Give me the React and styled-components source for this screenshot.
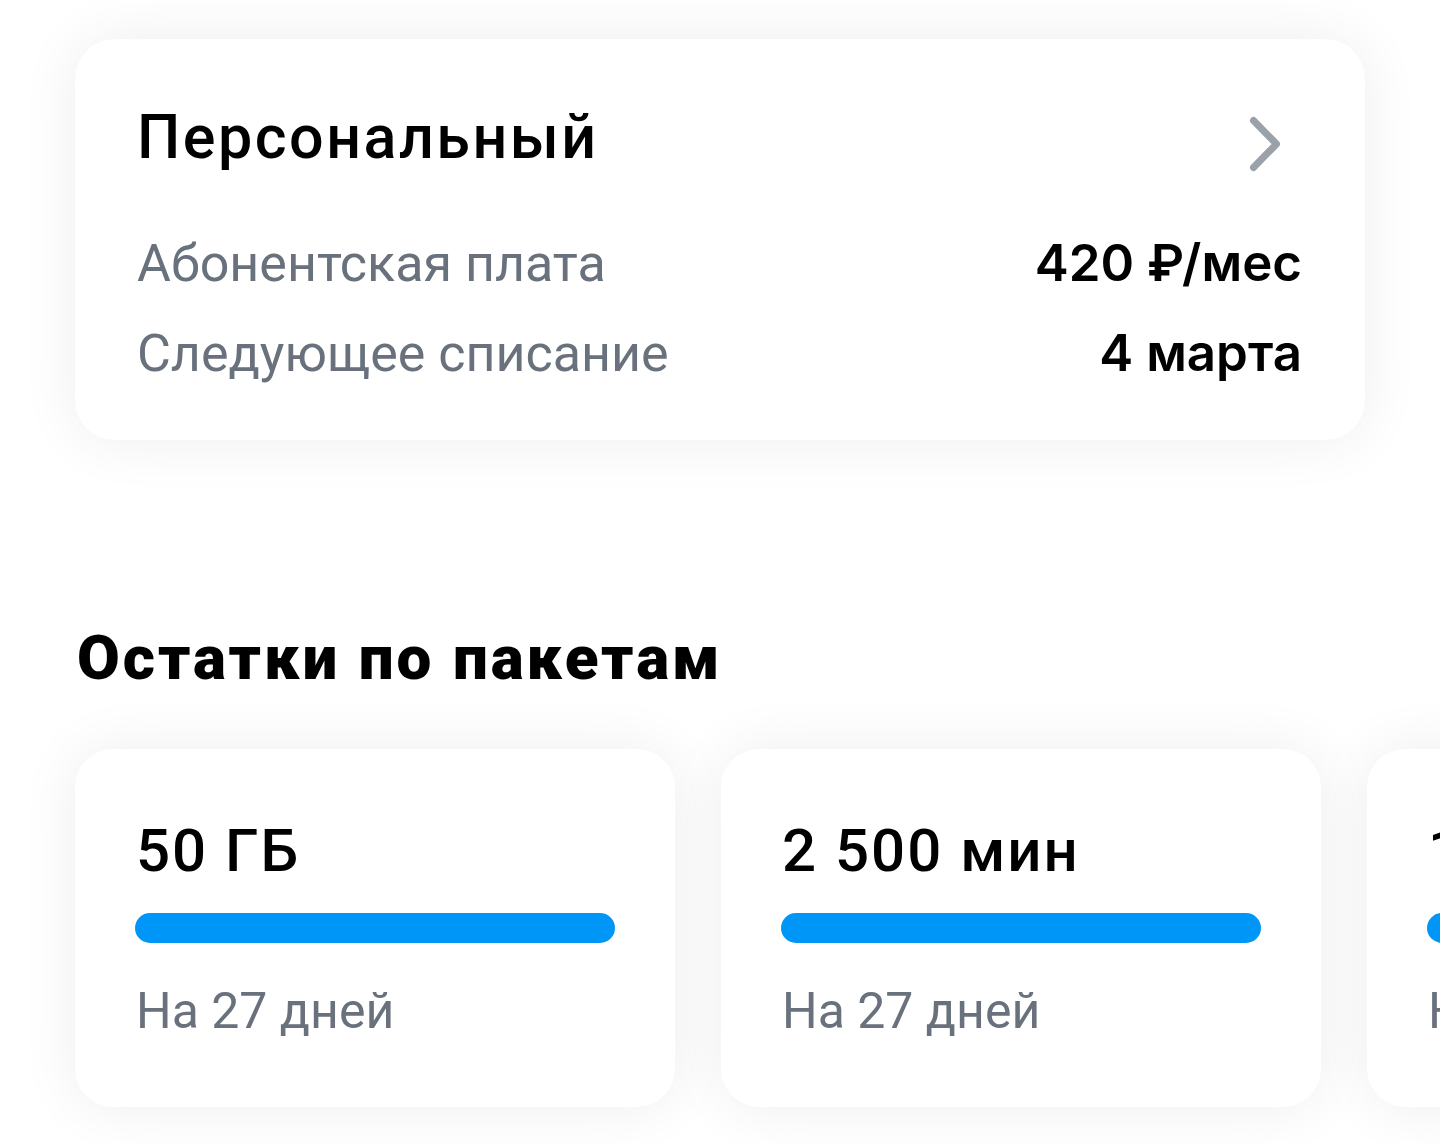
import React from "react";
import styled, { createGlobalStyle } from "styled-components";

const Global = createGlobalStyle`
  html, body { margin: 0; padding: 0; background: #ffffff; }
  body { width: 1440px; height: 1144px; overflow: hidden; font-family: Roboto, "Noto Sans", sans-serif; }
`;

const Page = styled.div`
  padding: 39px 0 0 75px;
  display: flex;
  flex-direction: column;
`;

const TariffCard = styled.div`
  width: 1290px;
  box-sizing: border-box;
  background: #fff;
  border-radius: 40px;
  box-shadow: 0 0 60px rgba(0, 0, 0, 0.07);
  padding: 58px 63px 42px 62px;
  display: flex;
  flex-direction: column;
`;

const TitleRow = styled.div`
  display: flex;
  justify-content: space-between;
  align-items: flex-start;
  margin-bottom: 41px;
`;

const Title = styled.div`
  font-family: Roboto, sans-serif;
  font-weight: 500;
  font-size: 61px;
  letter-spacing: 2.5px;
  line-height: 80px;
  color: #000;
`;

const Chevron = styled.svg`
  width: 40px;
  height: 80px;
  margin-right: 20px;
`;

const InfoRow = styled.div`
  display: flex;
  justify-content: space-between;
  align-items: baseline;
  height: 90px;
  line-height: 90px;
`;

const Label = styled.span`
  font-family: Roboto, sans-serif;
  font-size: 52px;
  color: #68717c;
`;

const Value = styled.span`
  font-family: Inter, "Liberation Sans", sans-serif;
  font-weight: 600;
  font-size: 51px;
  color: #000;
`;

const Heading = styled.h2`
  margin: 178px 0 51px 2px;
  font-family: Roboto, sans-serif;
  font-weight: 900;
  font-size: 62px;
  letter-spacing: 3px;
  line-height: 80px;
  color: #000;
`;

const Packages = styled.div`
  display: flex;
  gap: 46px;
`;

const PackageCard = styled.div`
  flex: 0 0 600px;
  height: 358px;
  box-sizing: border-box;
  background: #fff;
  border-radius: 38px;
  box-shadow: 0 0 60px rgba(0, 0, 0, 0.07);
  padding: 66px 60px 0 60px;
  display: flex;
  flex-direction: column;
`;

const Amount = styled.div`
  font-family: Roboto, sans-serif;
  font-weight: 500;
  font-size: 60px;
  letter-spacing: 2px;
  line-height: 72px;
  color: #000;
  padding-left: 1px;
  white-space: nowrap;
`;

const Bar = styled.div`
  margin-top: 26px;
  height: 30px;
  border-radius: 15px;
  background: #0096f8;
  width: 100%;
`;

const Period = styled.div`
  margin-top: 38px;
  font-family: Roboto, sans-serif;
  font-size: 50px;
  line-height: 60px;
  color: #68717c;
  padding-left: 1px;
  white-space: nowrap;
`;

const packages = [
  { amount: "50 ГБ", period: "На 27 дней" },
  { amount: "2 500 мин", period: "На 27 дней" },
  { amount: "1 000 SMS", period: "На 27 дней" },
];

export default function App() {
  return (
    <>
      <Global />
      <Page>
        <TariffCard>
          <TitleRow>
            <Title>Персональный</Title>
            <Chevron viewBox="0 0 40 80" fill="none">
              <path
                d="M11.5 23.5 L34.5 47 L11.5 70.5"
                stroke="#9aa1a8"
                strokeWidth="7"
                strokeLinecap="round"
                strokeLinejoin="round"
              />
            </Chevron>
          </TitleRow>
          <InfoRow>
            <Label>Абонентская плата</Label>
            <Value>420 ₽/мес</Value>
          </InfoRow>
          <InfoRow>
            <Label>Следующее списание</Label>
            <Value>4 марта</Value>
          </InfoRow>
        </TariffCard>
        <Heading>Остатки по пакетам</Heading>
        <Packages>
          {packages.map((p, i) => (
            <PackageCard key={i}>
              <Amount>{p.amount}</Amount>
              <Bar />
              <Period>{p.period}</Period>
            </PackageCard>
          ))}
        </Packages>
      </Page>
    </>
  );
}
